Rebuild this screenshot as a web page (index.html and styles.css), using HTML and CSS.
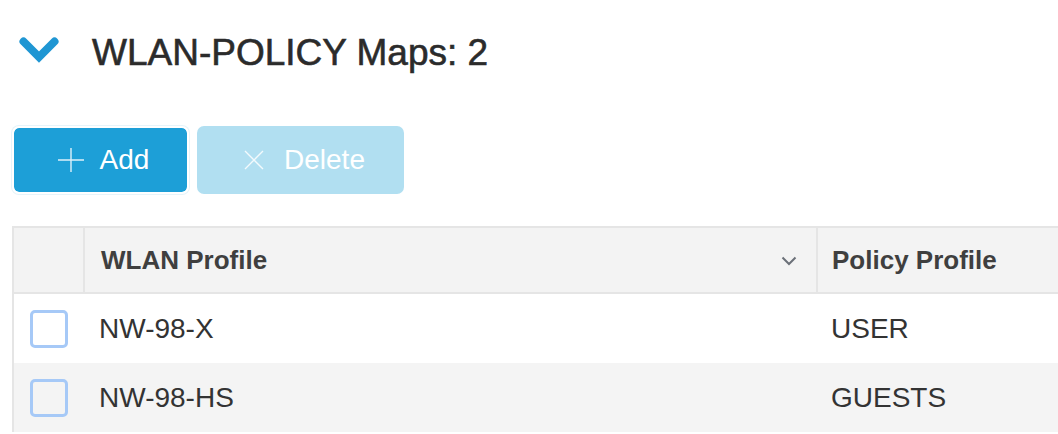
FILE: index.html
```html
<!DOCTYPE html>
<html>
<head>
<meta charset="utf-8">
<link rel="stylesheet" href="styles.css">
</head>
<body>
<div class="section-head">
  <svg class="collapse" viewBox="0 0 40 26" width="40" height="26"><path d="M4.5 4.5 L20 20 L35.5 4.5" fill="none" stroke="#1f96d3" stroke-width="8" stroke-linecap="round" stroke-linejoin="miter"/></svg>
  <h1 class="title">WLAN-POLICY Maps: 2</h1>
</div>
<div class="toolbar">
  <button class="btn btn-add"><svg class="ico" viewBox="0 0 26 24" width="26" height="24"><path d="M13 0 V24 M0 12 H26" stroke="#ffffff" stroke-opacity="0.85" stroke-width="1.4" fill="none"/></svg><span>Add</span></button>
  <button class="btn btn-del"><svg class="ico" viewBox="0 0 20 20" width="20" height="20"><path d="M1 1 L19 19 M19 1 L1 19" stroke="#ffffff" stroke-opacity="0.85" stroke-width="1.4" fill="none"/></svg><span>Delete</span></button>
</div>
<div class="grid">
  <div class="row head">
    <div class="cell sel"></div>
    <div class="cell col-wlan"><span>WLAN Profile</span><svg class="sort" viewBox="0 0 16 10" width="16" height="10"><path d="M1.5 1.5 L8 8 L14.5 1.5" fill="none" stroke="#6b7078" stroke-width="2"/></svg></div>
    <div class="cell col-policy">Policy Profile</div>
  </div>
  <div class="row">
    <div class="cell sel"><span class="check"></span></div>
    <div class="cell col-wlan">NW-98-X</div>
    <div class="cell col-policy">USER</div>
  </div>
  <div class="row alt">
    <div class="cell sel"><span class="check"></span></div>
    <div class="cell col-wlan">NW-98-HS</div>
    <div class="cell col-policy">GUESTS</div>
  </div>
</div>
</body>
</html>
```
FILE: styles.css
```css
* { box-sizing: border-box; }
html, body { margin: 0; padding: 0; background: #ffffff; overflow: hidden; }
body { font-family: "Liberation Sans", Arial, sans-serif; color: #333333; width: 1058px; height: 434px; }

.section-head {
  display: flex;
  align-items: center;
  padding-top: 31px;
  padding-left: 19px;
  height: 75px;
}
.collapse { margin-bottom: 6px; flex: none; }
.title {
  margin: 0 0 0 33px;
  font-size: 37px;
  line-height: 44px;
  font-weight: 400;
  color: #2b2b2b;
  letter-spacing: 0px;
  -webkit-text-stroke: 0.6px #2b2b2b;
}

.toolbar {
  display: flex;
  gap: 8px;
  padding-left: 12px;
  margin-top: 51px;
  height: 68px;
}
.btn {
  display: flex;
  align-items: center;
  justify-content: center;
  height: 68px;
  border-radius: 7px;
  font-family: "Liberation Sans", Arial, sans-serif;
  font-size: 28px;
  color: #ffffff;
  padding: 0;
  cursor: pointer;
}
.btn-add {
  width: 177px;
  background: #1d9fd7;
  border: 2px solid #ffffff;
  background-clip: padding-box;
  box-shadow: 0 0 0 1px #e6f4fa;
  padding-left: 6px;
  gap: 16px;
}
.btn-del {
  width: 207px;
  background: #b1dff1;
  border: none;
  padding-left: 8px;
  gap: 20px;
}
.btn .ico { flex: none; }

.grid {
  margin-top: 32px;
  margin-left: 12px;
  border-left: 2px solid #e5e5e5;
}
.row {
  display: grid;
  grid-template-columns: 71px 733px 1fr;
  height: 69px;
  background: #ffffff;
}
.row.alt { background: #f4f4f4; }
.row.head {
  height: 68px;
  background: #f3f3f3;
  border-top: 2px solid #e5e5e5;
  border-bottom: 2px solid #e5e5e5;
}
.cell {
  display: flex;
  align-items: center;
  font-size: 28px;
  color: #333333;
}
.head .cell { font-size: 26px; font-weight: 700; color: #3f3f3f; }
.head .sel, .head .col-wlan { border-right: 2px solid #e5e5e5; }
.sel { justify-content: center; }
.sel .check { margin-right: 2px; }
.col-wlan { padding-left: 16px; padding-right: 19px; }
.head .col-wlan { justify-content: space-between; }
.col-policy { padding-left: 14px; }
.row:not(.head) .col-wlan { padding-left: 14px; }
.row:not(.head) .col-policy { padding-left: 13px; }
.sort { flex: none; margin-top: 2px; }
.check {
  display: block;
  width: 38px;
  height: 38px;
  border: 3px solid #a6c9f7;
  border-radius: 5px;
  background: #ffffff;
}
.row.alt .check { background: #f4f4f4; }
```
